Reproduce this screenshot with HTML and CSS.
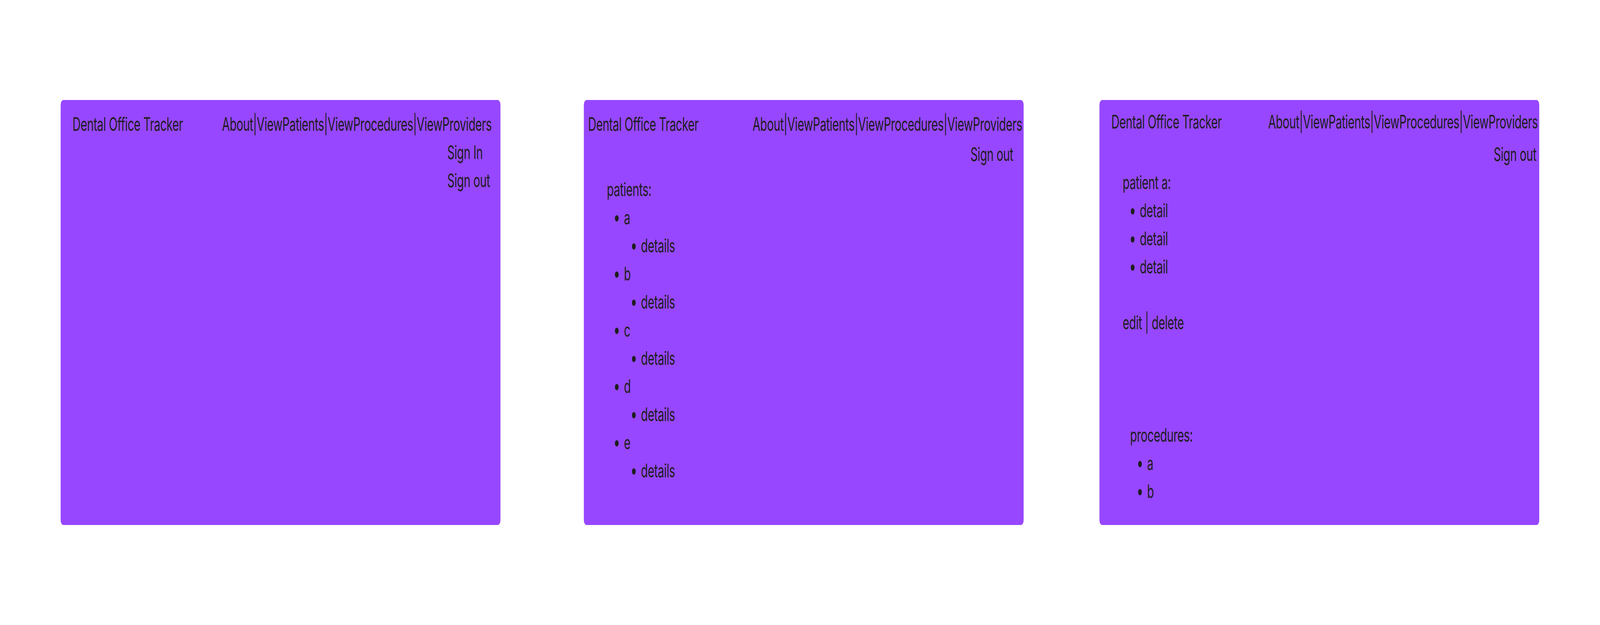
FILE: index.html
```html
<!DOCTYPE html>
<html lang="en">
<head>
<meta charset="utf-8">
<title>Dental Office Tracker</title>
<link rel="stylesheet" href="styles.css">
</head>
<body>
<div class="viewport">
<div class="stage" id="stage">
<main class="board">

  <section class="frame frame--home">
    <header class="topbar">
      <div class="brand">Dental Office Tracker</div>
      <div class="nav-col">
        <nav class="nav"><a class="link" href="#">About</a>|<a class="link" href="#">ViewPatients</a>|<a class="link" href="#">ViewProcedures</a>|<a class="link" href="#">ViewProviders</a></nav>
        <div class="auth"><a class="link" href="#">Sign In</a><a class="link" href="#">Sign out</a></div>
      </div>
    </header>
  </section>

  <section class="frame frame--list">
    <header class="topbar">
      <div class="brand">Dental Office Tracker</div>
      <div class="nav-col">
        <nav class="nav"><a class="link" href="#">About</a>|<a class="link" href="#">ViewPatients</a>|<a class="link" href="#">ViewProcedures</a>|<a class="link" href="#">ViewProviders</a></nav>
        <div class="auth"><a class="link" href="#">Sign out</a></div>
      </div>
    </header>
    <div class="content">
      <div class="label">patients:</div>
      <ul class="list">
        <li>a<ul class="list"><li>details</li></ul></li>
        <li>b<ul class="list"><li>details</li></ul></li>
        <li>c<ul class="list"><li>details</li></ul></li>
        <li>d<ul class="list"><li>details</li></ul></li>
        <li>e<ul class="list"><li>details</li></ul></li>
      </ul>
    </div>
  </section>

  <section class="frame frame--detail">
    <header class="topbar">
      <div class="brand">Dental Office Tracker</div>
      <div class="nav-col">
        <nav class="nav"><a class="link" href="#">About</a>|<a class="link" href="#">ViewPatients</a>|<a class="link" href="#">ViewProcedures</a>|<a class="link" href="#">ViewProviders</a></nav>
        <div class="auth"><a class="link" href="#">Sign out</a></div>
      </div>
    </header>
    <div class="content">
      <div class="label">patient a:</div>
      <ul class="list list--details">
        <li>detail</li>
        <li>detail</li>
        <li>detail</li>
      </ul>
      <div class="actions"><a class="link" href="#">edit</a> | <a class="link" href="#">delete</a></div>
      <div class="procedures">
        <div class="label">procedures:</div>
        <ul class="list">
          <li>a</li>
          <li>b</li>
        </ul>
      </div>
    </div>
  </section>

</main>
</div>
</div>
<script src="app.js"></script>
</body>
</html>
```

FILE: app.js
```js
(function () {
  var root = document.documentElement;
  function fit() {
    var sx = Math.floor((window.innerWidth / 6752) * 10000) / 10000;
    var sy = Math.floor((window.innerHeight / 1600) * 10000) / 10000;
    root.style.setProperty('--sx', String(sx));
    root.style.setProperty('--sy', String(sy));
  }
  fit();
  window.addEventListener('resize', fit);
})();
```

FILE: styles.css
```css
:root {
  --sx: 0.6066;
  --sy: 1;
}

* {
  box-sizing: border-box;
}

html,
body {
  margin: 0;
  padding: 0;
  background: #ffffff;
  overflow: hidden;
}

body {
  font-family: Inter, "Noto Sans", "Liberation Sans", sans-serif;
}

/* clips the design canvas to the window */
.viewport {
  width: 100vw;
  height: 100vh;
  overflow: clip;
}

/* the design is drawn on a 6752 x 1600 canvas and fitted to the window */
.stage {
  width: 6752px;
  height: 1600px;
  transform-origin: 0 0;
  transform: scale(var(--sx), var(--sy));
}

.board {
  display: flex;
  align-items: flex-start;
  padding: 256px 256px 0 256px;
}

.frame {
  flex: 0 0 1856px;
  width: 1856px;
  height: 1088px;
  background: #9747ff;
  border-radius: 12px;
  color: #1e1e1e;
  font-size: 48px;
  line-height: 72px;
  letter-spacing: -0.016em;
}

.frame--home {
  padding: 26px 37px 0 50px;
}

.frame--list {
  margin-left: 352px;
  padding: 26px 6px 0 18px;
}

.frame--detail {
  margin-left: 320px;
  padding: 20px 6px 0 50px;
}

.topbar {
  display: flex;
  justify-content: space-between;
  align-items: flex-start;
}

.brand {
  white-space: nowrap;
}

.nav-col {
  display: flex;
  flex-direction: column;
  align-items: flex-end;
}

.nav {
  white-space: nowrap;
}

.auth {
  display: flex;
  flex-direction: column;
  align-items: flex-start;
  white-space: nowrap;
}

.frame--home .auth {
  margin-right: 7px;
}

.frame--list .auth {
  margin-top: 5px;
  margin-right: 38px;
}

.frame--detail .auth {
  margin-top: 11px;
  margin-right: 6px;
}

.link {
  color: inherit;
  text-decoration: none;
}

.content {
  display: flex;
  flex-direction: column;
  align-items: flex-start;
}

.frame--list .content {
  margin-top: 18px;
  margin-left: 79px;
}

.frame--detail .content {
  margin-left: 48px;
}

.list {
  margin: 0;
  padding-left: 72px;
  list-style: disc;
}

.list--details {
  margin-bottom: 71px;
}

.actions {
  white-space: nowrap;
}

.procedures {
  margin-top: 216px;
  margin-left: 31px;
}
```
